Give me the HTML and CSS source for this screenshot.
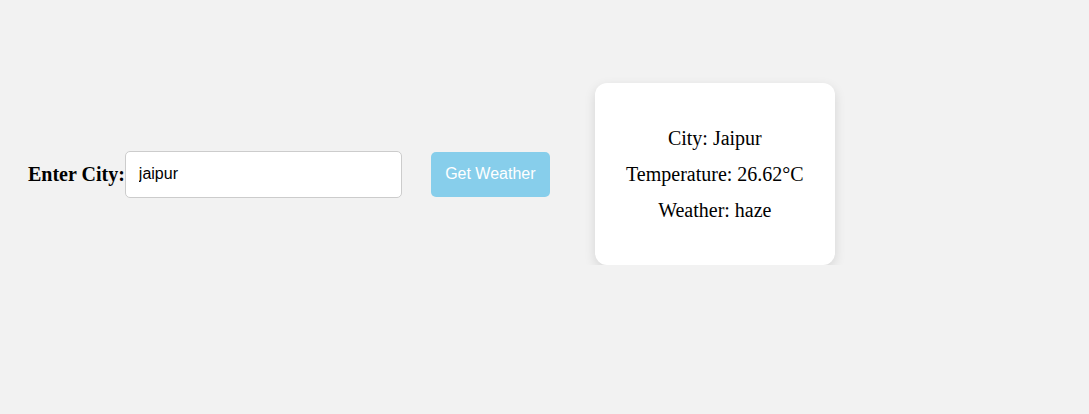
FILE: index.html
```html
<!DOCTYPE html>
<html>
<head>
<meta charset="utf-8">
<link rel="stylesheet" href="styles.css">
</head>
<body>
<div class="app">
  <label class="label" for="city">Enter City:</label>
  <input class="city-input" id="city" type="text" value="jaipur">
  <button class="btn">Get Weather</button>
  <div class="card">
    <p class="line">City: Jaipur</p>
    <p class="line">Temperature: 26.62°C</p>
    <p class="line">Weather: haze</p>
  </div>
</div>
</body>
</html>
```
FILE: styles.css
```css
html, body {
  margin: 0;
  padding: 0;
  background: #f2f2f2;
  font-family: "Liberation Serif", "Times New Roman", serif;
}
.app {
  display: flex;
  align-items: center;
  padding: 83px 0 0 28px;
}
.label {
  font-weight: bold;
  font-size: 20px;
  color: #000;
}
.city-input {
  box-sizing: border-box;
  width: 277px;
  height: 47px;
  border: 1px solid #cccccc;
  border-radius: 5px;
  padding: 0 13px;
  font-family: "Liberation Sans", Arial, sans-serif;
  font-size: 16px;
  color: #000;
  background: #fff;
  outline: none;
}
.btn {
  box-sizing: border-box;
  width: 119px;
  height: 45px;
  margin-left: 29px;
  border: none;
  border-radius: 5px;
  background: #87ceeb;
  color: #fff;
  font-family: "Liberation Sans", Arial, sans-serif;
  font-size: 16px;
  padding: 0;
}
.card {
  box-sizing: border-box;
  width: 240px;
  height: 182px;
  margin-left: 45px;
  padding: 31px 10px;
  background: #fff;
  border-radius: 12px;
  box-shadow: 0 4px 12px rgba(0, 0, 0, 0.12);
  text-align: center;
  display: flex;
  flex-direction: column;
  justify-content: center;
}
.line {
  margin: 6.5px 0;
  font-size: 20px;
  color: #000;
}
```
